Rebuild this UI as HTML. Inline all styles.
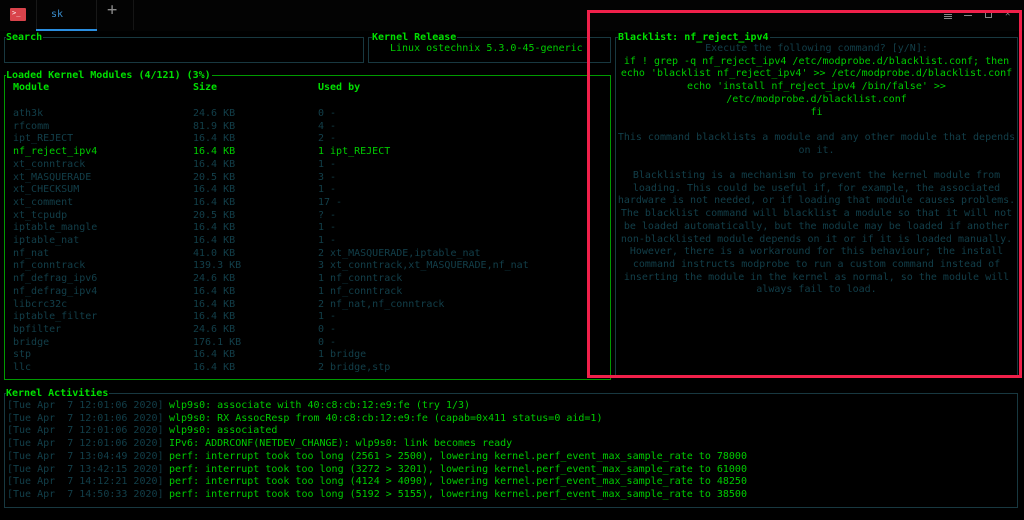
<!DOCTYPE html>
<html><head><meta charset="utf-8"><style>
*{margin:0;padding:0;box-sizing:border-box}
body{width:1024px;height:520px;background:#000;position:relative;overflow:hidden;font-family:"DejaVu Sans Mono","Liberation Mono",monospace;font-size:10px;line-height:12.7px}
.a{position:absolute;white-space:pre}
.g{color:#00cc00}.gb{color:#00e000;font-weight:bold}.d{color:#123f4a}
.box{position:absolute;border:1px solid #183840}
.gbox{position:absolute;border:1px solid #009a00}
.tt{position:absolute;background:#000;padding-right:1px;top:-6px;left:1px}
</style></head><body>
<div style="position:absolute;left:0;top:0;width:1024px;height:31px;background:#030303"></div>
<div style="position:absolute;left:10px;top:8px;width:16px;height:13px;background:#d9434b;border-radius:1px"></div>
<div class="a" style="left:12px;top:7px;color:#fff;font-size:7px">&gt;_</div>
<div style="position:absolute;left:36px;top:0;width:61px;height:30px;border-left:1px solid #181818;border-right:1px solid #181818"></div>
<div class="a" style="left:51px;top:9px;color:#3a8fd0;font-size:10px">sk</div>
<div style="position:absolute;left:36px;top:29px;width:61px;height:2px;background:#2a8ee0"></div>
<div class="a" style="left:107px;top:4px;color:#888;font-size:17px">+</div>
<div style="position:absolute;left:133px;top:0;width:1px;height:30px;background:#151515"></div>
<div style="position:absolute;left:944px;top:14px;width:8px;height:1px;background:#888;box-shadow:0 2px 0 #888,0 4px 0 #888"></div>
<div style="position:absolute;left:964px;top:15px;width:8px;height:1px;background:#888"></div>
<div style="position:absolute;left:985px;top:12px;width:7px;height:6px;border:1px solid #888"></div>
<div class="a" style="left:1005px;top:8px;color:#888;font-size:9px">✕</div>

<div class="box" style="left:4px;top:37px;width:360px;height:26px"><span class="tt gb">Search</span></div>
<div class="box" style="left:368px;top:37px;width:243px;height:26px"><span class="tt gb" style="left:3px">Kernel Release</span></div>
<div class="a g" style="left:390px;top:43px">Linux ostechnix 5.3.0-45-generic</div>

<div class="gbox" style="left:4px;top:75px;width:607px;height:305px"><span class="tt gb">Loaded Kernel Modules (4/121) (3%)</span></div>
<div class="a gb" style="left:13px;top:82px">Module</div>
<div class="a gb" style="left:193px;top:82px">Size</div>
<div class="a gb" style="left:318px;top:82px">Used by</div>
<div class="a d" style="left:13px;top:108px">ath3k
rfcomm
ipt_REJECT
<span class="g">nf_reject_ipv4</span>
xt_conntrack
xt_MASQUERADE
xt_CHECKSUM
xt_comment
xt_tcpudp
iptable_mangle
iptable_nat
nf_nat
nf_conntrack
nf_defrag_ipv6
nf_defrag_ipv4
libcrc32c
iptable_filter
bpfilter
bridge
stp
llc</div>
<div class="a d" style="left:193px;top:108px">24.6 KB
81.9 KB
16.4 KB
<span class="g">16.4 KB</span>
16.4 KB
20.5 KB
16.4 KB
16.4 KB
20.5 KB
16.4 KB
16.4 KB
41.0 KB
139.3 KB
24.6 KB
16.4 KB
16.4 KB
16.4 KB
24.6 KB
176.1 KB
16.4 KB
16.4 KB</div>
<div class="a d" style="left:318px;top:108px">0 -
4 -
2 -
<span class="g">1 ipt_REJECT</span>
1 -
3 -
1 -
17 -
? -
1 -
1 -
2 xt_MASQUERADE,iptable_nat
3 xt_conntrack,xt_MASQUERADE,nf_nat
1 nf_conntrack
1 nf_conntrack
2 nf_nat,nf_conntrack
1 -
0 -
0 -
1 bridge
2 bridge,stp</div>

<div class="box" style="left:615px;top:37px;width:403px;height:339px"><span class="tt gb" style="left:2px">Blacklist: nf_reject_ipv4</span></div>
<div class="a" style="left:616px;top:43px;width:401px;text-align:center"><span class="d">Execute the following command? [y/N]:</span>
<span class="g">if ! grep -q nf_reject_ipv4 /etc/modprobe.d/blacklist.conf; then
echo 'blacklist nf_reject_ipv4' &gt;&gt; /etc/modprobe.d/blacklist.conf
echo 'install nf_reject_ipv4 /bin/false' &gt;&gt;
/etc/modprobe.d/blacklist.conf
fi</span>
<span class="d">
This command blacklists a module and any other module that depends
on it.

Blacklisting is a mechanism to prevent the kernel module from
loading. This could be useful if, for example, the associated
hardware is not needed, or if loading that module causes problems.
The blacklist command will blacklist a module so that it will not
be loaded automatically, but the module may be loaded if another
non-blacklisted module depends on it or if it is loaded manually.
However, there is a workaround for this behaviour; the install
command instructs modprobe to run a custom command instead of
inserting the module in the kernel as normal, so the module will
always fail to load.</span></div>

<div style="position:absolute;left:587px;top:10px;width:435px;height:368px;border:3px solid #f0204a"></div>

<div class="box" style="left:4px;top:393px;width:1014px;height:115px"><span class="tt gb">Kernel Activities</span></div>
<div class="a d" style="left:7px;top:400px">[Tue Apr  7 12:01:06 2020]
[Tue Apr  7 12:01:06 2020]
[Tue Apr  7 12:01:06 2020]
[Tue Apr  7 12:01:06 2020]
[Tue Apr  7 13:04:49 2020]
[Tue Apr  7 13:42:15 2020]
[Tue Apr  7 14:12:21 2020]
[Tue Apr  7 14:50:33 2020]</div>
<div class="a g" style="left:169px;top:400px">wlp9s0: associate with 40:c8:cb:12:e9:fe (try 1/3)
wlp9s0: RX AssocResp from 40:c8:cb:12:e9:fe (capab=0x411 status=0 aid=1)
wlp9s0: associated
IPv6: ADDRCONF(NETDEV_CHANGE): wlp9s0: link becomes ready
perf: interrupt took too long (2561 &gt; 2500), lowering kernel.perf_event_max_sample_rate to 78000
perf: interrupt took too long (3272 &gt; 3201), lowering kernel.perf_event_max_sample_rate to 61000
perf: interrupt took too long (4124 &gt; 4090), lowering kernel.perf_event_max_sample_rate to 48250
perf: interrupt took too long (5192 &gt; 5155), lowering kernel.perf_event_max_sample_rate to 38500</div>
</body></html>
